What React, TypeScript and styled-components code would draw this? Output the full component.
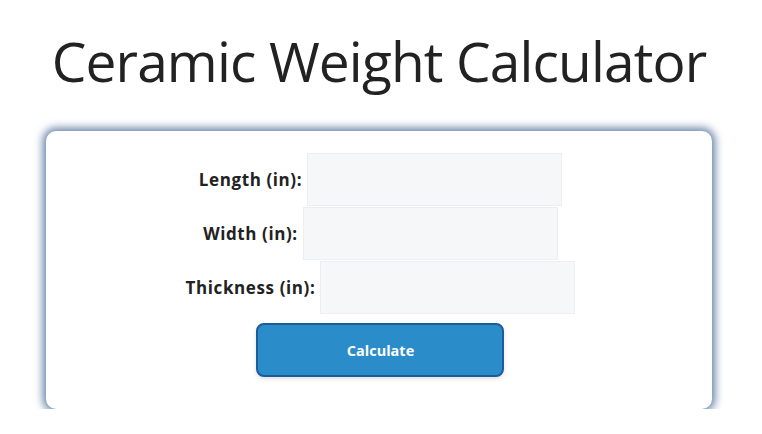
import React from "react";
import styled, { createGlobalStyle } from "styled-components";

const Global = createGlobalStyle`
  html, body { margin: 0; padding: 0; background: #ffffff; }
  body { font-family: "Open Sans", "Noto Sans", sans-serif; color: #222222; }
  * { box-sizing: border-box; }
`;

const Page = styled.div`
  display: flex;
  flex-direction: column;
  align-items: center;
  padding: 23px 4px 0 0;
`;

const Title = styled.h1`
  margin: 0;
  font-size: 55px;
  font-weight: 400;
  line-height: 76px;
  color: #222222;
  letter-spacing: -0.85px;
`;

const Card = styled.div`
  margin-top: 32px;
  width: 666px;
  background: #ffffff;
  border-radius: 10px;
  box-shadow: 0 0 9px 3px rgba(84, 116, 156, 0.9);
  padding: 22px 0 32px;
  display: flex;
  flex-direction: column;
  align-items: center;
`;

const Form = styled.form`
  display: flex;
  flex-direction: column;
  align-items: center;
  gap: 1px;
  padding-left: 3px;
`;

const Row = styled.div`
  display: flex;
  align-items: center;
  justify-content: center;
  gap: 5px;
`;

const Label = styled.label`
  font-size: 17px;
  font-weight: 700;
  letter-spacing: 0.6px;
  color: #222222;
`;

const Input = styled.input`
  width: 255px;
  height: 53px;
  background: #f6f7f9;
  border: 1px solid #eceef1;
  border-radius: 0;
  outline: none;
  font-family: inherit;
  font-size: 16px;
  padding: 0 10px;
`;

const Button = styled.button`
  margin-top: 8px;
  width: 248px;
  height: 54px;
  background: #2a8dca;
  border: 2px solid #1a5c9c;
  border-radius: 8px;
  color: #ffffff;
  font-family: inherit;
  font-size: 14.5px;
  font-weight: 700;
  box-shadow: 0 2px 4px rgba(0, 0, 0, 0.12);
  cursor: pointer;
`;

const fields = [
  { id: "length", label: "Length (in):" },
  { id: "width", label: "Width (in):" },
  { id: "thickness", label: "Thickness (in):" },
];

export default function App() {
  return (
    <>
      <Global />
      <Page>
        <Title>Ceramic Weight Calculator</Title>
        <Card>
          <Form onSubmit={(e) => e.preventDefault()}>
            {fields.map((f) => (
              <Row key={f.id}>
                <Label htmlFor={f.id}>{f.label}</Label>
                <Input id={f.id} type="text" />
              </Row>
            ))}
            <Button type="submit">Calculate</Button>
          </Form>
        </Card>
      </Page>
    </>
  );
}
